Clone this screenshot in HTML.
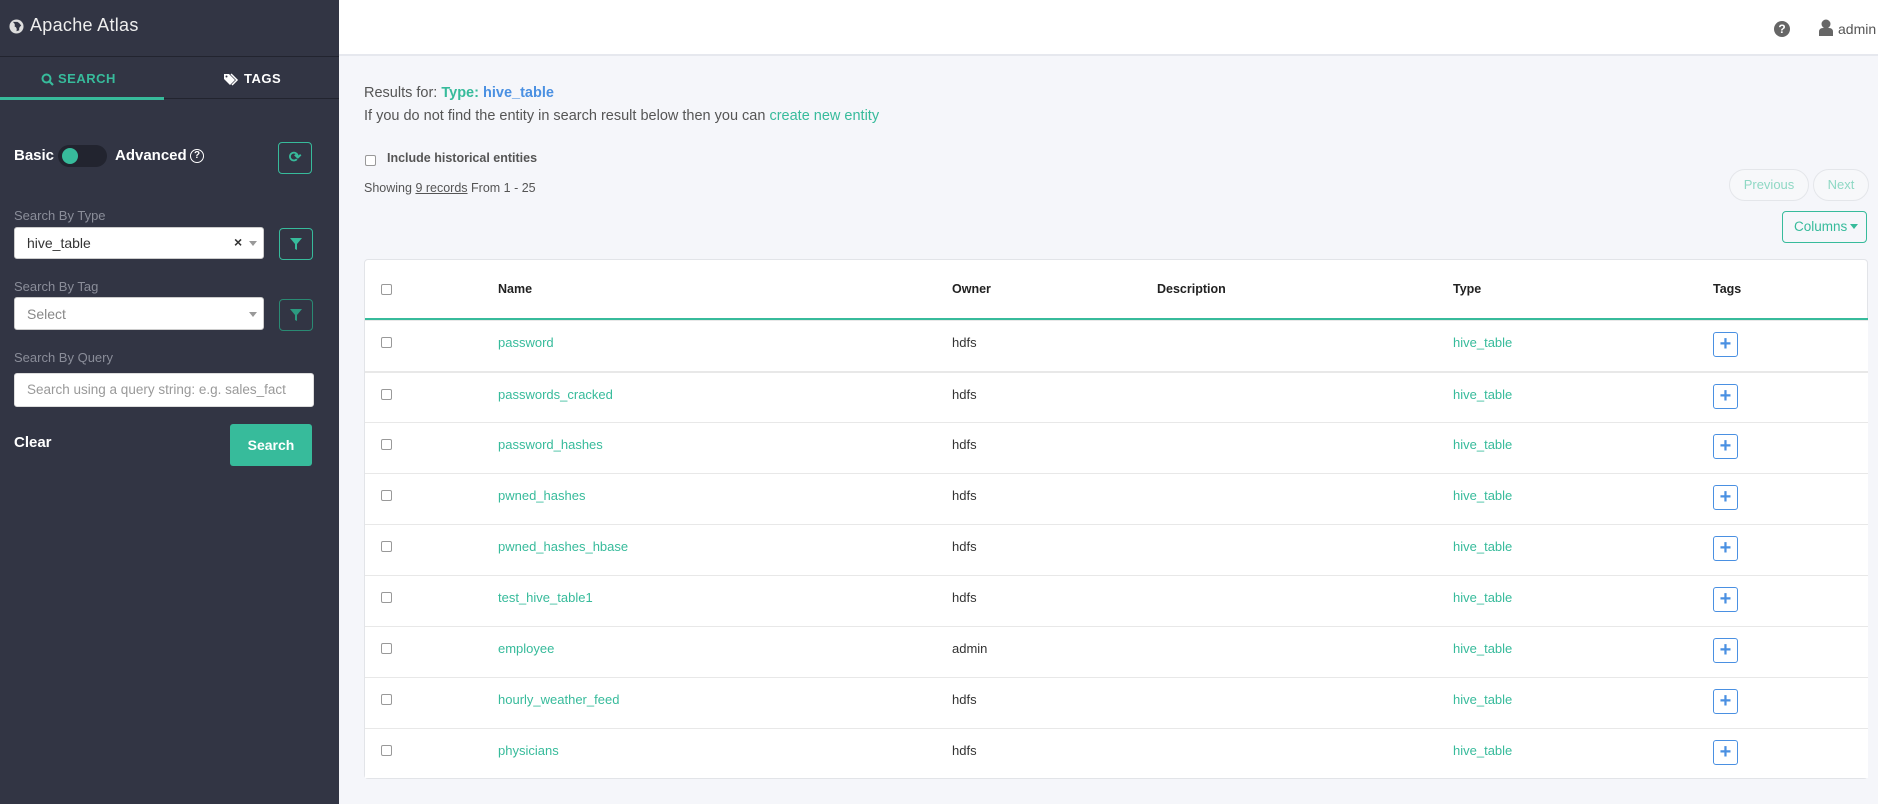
<!DOCTYPE html>
<html><head><meta charset="utf-8"><style>
*{box-sizing:border-box;margin:0;padding:0}
body{width:1878px;height:804px;overflow:hidden;background:#f5f6fa;font-family:"Liberation Sans",sans-serif;font-size:14px;color:#333;position:relative}
.a{position:absolute}
#side{left:0;top:0;width:339px;height:804px;background:#323544;color:#fff}
.g{color:#37bb9b}
.lbl{color:#8a8d99;font-size:13px}
.sel{background:#fff;border-radius:3px;border:1px solid #ccc}
.fbtn{border:1px solid #37bb9b;border-radius:4px;width:34px;height:32px}
.row{left:365px;width:1503px;height:51px;border-top:1px solid #e8e8e8;background:#fff}
.row div{font-size:13px!important}
.cb{width:11px;height:11px;border:1px solid #999;border-radius:2px;background:#fff}
.row .plus{width:25px;height:25px;border:1px solid #4a90e2;border-radius:3px;background:#fff;color:#4a90e2;font-weight:bold;font-size:20px!important;line-height:22px;text-align:center}
</style></head><body>
<div id="side" class="a">
  <div class="a" style="left:0;top:0;width:339px;height:57px;border-bottom:1px solid #22242f"></div>
  <svg class="a" style="left:9px;top:19px" width="15" height="15" viewBox="0 0 16 16"><circle cx="8" cy="8" r="7.5" fill="#ddd"/><path d="M4 3 Q7 5 6 8 Q9 9 8 13 L11 12 Q10 9 13 7 Q11 4 9 3Z" fill="#323544"/></svg>
  <div class="a" style="left:30px;top:15px;font-size:18px;color:#eee;letter-spacing:.3px">Apache Atlas</div>
  <div class="a" style="left:0;top:98px;width:339px;height:1px;background:#22242f"></div>
  <div class="a" style="left:0;top:97px;width:164px;height:3px;background:#37bb9b"></div>
  <svg class="a" style="left:41px;top:73px" width="13" height="13" viewBox="0 0 13 13"><circle cx="5.5" cy="5.5" r="4" stroke="#37bb9b" stroke-width="2" fill="none"/><path d="M8.5 8.5 L12 12" stroke="#37bb9b" stroke-width="2.2"/></svg>
  <div class="a g" style="left:58px;top:71px;font-size:13px;font-weight:bold;letter-spacing:.5px">SEARCH</div>
  <svg class="a" style="left:224px;top:73px" width="15" height="13" viewBox="0 0 15 13"><path d="M0 1 L0 6 L6 12 L11 7 L5 1Z" fill="#fff"/><circle cx="2.5" cy="3.5" r="1" fill="#323544"/><path d="M7 1 L13 7 L8 12" stroke="#fff" stroke-width="1.5" fill="none"/></svg>
  <div class="a" style="left:244px;top:71px;font-size:13px;font-weight:bold;letter-spacing:.5px">TAGS</div>
  <div class="a" style="left:14px;top:147px;font-size:15px;font-weight:bold">Basic</div>
  <div class="a" style="left:58px;top:145px;width:49px;height:22px;border-radius:11px;background:#22242f"></div>
  <div class="a" style="left:62px;top:148px;width:16px;height:16px;border-radius:8px;background:#37bb9b"></div>
  <div class="a" style="left:115px;top:147px;font-size:15px;font-weight:bold">Advanced</div>
  <div class="a" style="left:190px;top:149px;width:14px;height:14px;border:1.5px solid #fff;border-radius:7px;font-size:10px;text-align:center;line-height:11px;font-weight:bold">?</div>
  <div class="a fbtn" style="left:278px;top:142px;height:32px;color:#37bb9b;text-align:center;line-height:30px;font-size:15px;font-weight:bold">⟳</div>
  <div class="a lbl" style="left:14px;top:208px">Search By Type</div>
  <div class="a sel" style="left:14px;top:227px;width:250px;height:32px"></div>
  <div class="a" style="left:27px;top:235px;color:#333">hive_table</div>
  <div class="a" style="left:234px;top:234px;font-size:14px;font-weight:bold;color:#333">×</div>
  <div class="a" style="left:249px;top:241px;border:4px solid transparent;border-top:5px solid #999"></div>
  <div class="a fbtn" style="left:279px;top:228px"></div>
  <svg class="a" style="left:290px;top:238px" width="12" height="12" viewBox="0 0 12 12"><path d="M0 0 H12 L7 6 V12 L5 11 V6Z" fill="#37bb9b"/></svg>
  <div class="a lbl" style="left:14px;top:279px">Search By Tag</div>
  <div class="a sel" style="left:14px;top:297px;width:250px;height:33px"></div>
  <div class="a" style="left:27px;top:306px;color:#888">Select</div>
  <div class="a" style="left:249px;top:312px;border:4px solid transparent;border-top:5px solid #999"></div>
  <div class="a fbtn" style="left:279px;top:299px;border-color:#2a8a73"></div>
  <svg class="a" style="left:290px;top:309px" width="12" height="12" viewBox="0 0 12 12"><path d="M0 0 H12 L7 6 V12 L5 11 V6Z" fill="#2c9a80"/></svg>
  <div class="a lbl" style="left:14px;top:350px">Search By Query</div>
  <div class="a sel" style="left:14px;top:373px;width:300px;height:34px;border-color:#ddd"></div>
  <div class="a" style="left:27px;top:382px;color:#999;font-size:13.5px">Search using a query string: e.g. sales_fact</div>
  <div class="a" style="left:14px;top:434px;font-size:15px;font-weight:bold">Clear</div>
  <div class="a" style="left:230px;top:424px;width:82px;height:42px;background:#37bb9b;border-radius:3px;text-align:center;line-height:42px;font-weight:bold;font-size:14px">Search</div>
</div>
<div class="a" style="left:339px;top:0;width:1539px;height:56px;background:#fff;border-bottom:2px solid #e6e8ee"></div>
<div class="a" style="left:1774px;top:21px;width:16px;height:16px;border-radius:8px;background:#666;color:#fff;font-size:12px;font-weight:bold;text-align:center;line-height:16px">?</div>
<svg class="a" style="left:1819px;top:19px" width="14" height="17" viewBox="0 0 14 17"><circle cx="7" cy="5" r="4.5" fill="#666"/><path d="M0 17 V13 Q0 9 4 9 H10 Q14 9 14 13 V17Z" fill="#666"/></svg>
<div class="a" style="left:1838px;top:21px;color:#555;font-size:14px">admin</div>
<div class="a" style="left:364px;top:85px;font-size:14.5px;color:#555">Results for: <b class="g">Type:</b> <b style="color:#4a90e2">hive_table</b></div>
<div class="a" style="left:364px;top:108px;font-size:14.5px;color:#555">If you do not find the entity in search result below then you can <span class="g">create new entity</span></div>
<div class="a cb" style="left:365px;top:155px"></div>
<div class="a" style="left:387px;top:151px;font-weight:bold;color:#555;font-size:12.5px">Include historical entities</div>
<div class="a" style="left:364px;top:181px;font-size:12.5px;color:#555">Showing <u>9 records</u> From 1 - 25</div>
<div class="a" style="left:1729px;top:169px;width:80px;height:32px;border:1px solid #e4e6ea;border-radius:16px;color:#8fd8c4;text-align:center;line-height:30px;font-size:13px;background:#f7f8fa">Previous</div>
<div class="a" style="left:1813px;top:169px;width:56px;height:32px;border:1px solid #e4e6ea;border-radius:16px;color:#8fd8c4;text-align:center;line-height:30px;font-size:13px;background:#f7f8fa">Next</div>
<div class="a" style="left:1782px;top:211px;width:85px;height:32px;border:1px solid #37bb9b;border-radius:4px;color:#37bb9b;line-height:30px;font-size:13.5px;padding-left:11px">Columns<span style="display:inline-block;margin-left:3px;border:4px solid transparent;border-top:5px solid #37bb9b;vertical-align:-2px"></span></div>
<div class="a" style="left:364px;top:259px;width:1504px;height:520px;background:#fff;border:1px solid #e2e4e8;border-radius:4px"></div>
<div class="a" style="left:365px;top:318px;width:1503px;height:2px;background:#37bb9b"></div>
<div class="a cb" style="left:381px;top:284px"></div>
<div class="a" style="left:498px;top:282px;font-weight:bold;font-size:12.5px;color:#222">Name</div>
<div class="a" style="left:952px;top:282px;font-weight:bold;font-size:12.5px;color:#222">Owner</div>
<div class="a" style="left:1157px;top:282px;font-weight:bold;font-size:12.5px;color:#222">Description</div>
<div class="a" style="left:1453px;top:282px;font-weight:bold;font-size:12.5px;color:#222">Type</div>
<div class="a" style="left:1713px;top:282px;font-weight:bold;font-size:12.5px;color:#222">Tags</div>

<div class="a row" style="top:320px"><div class="a cb" style="left:16px;top:16px"></div><div class="a g" style="left:133px;top:14px">password</div><div class="a" style="left:587px;top:14px">hdfs</div><div class="a g" style="left:1088px;top:14px">hive_table</div><div class="a plus" style="left:1348px;top:11px">+</div></div>
<div class="a row" style="top:371px;border-top-width:2px"><div class="a cb" style="left:16px;top:16px"></div><div class="a g" style="left:133px;top:14px">passwords_cracked</div><div class="a" style="left:587px;top:14px">hdfs</div><div class="a g" style="left:1088px;top:14px">hive_table</div><div class="a plus" style="left:1348px;top:11px">+</div></div>
<div class="a row" style="top:422px"><div class="a cb" style="left:16px;top:16px"></div><div class="a g" style="left:133px;top:14px">password_hashes</div><div class="a" style="left:587px;top:14px">hdfs</div><div class="a g" style="left:1088px;top:14px">hive_table</div><div class="a plus" style="left:1348px;top:11px">+</div></div>
<div class="a row" style="top:473px"><div class="a cb" style="left:16px;top:16px"></div><div class="a g" style="left:133px;top:14px">pwned_hashes</div><div class="a" style="left:587px;top:14px">hdfs</div><div class="a g" style="left:1088px;top:14px">hive_table</div><div class="a plus" style="left:1348px;top:11px">+</div></div>
<div class="a row" style="top:524px"><div class="a cb" style="left:16px;top:16px"></div><div class="a g" style="left:133px;top:14px">pwned_hashes_hbase</div><div class="a" style="left:587px;top:14px">hdfs</div><div class="a g" style="left:1088px;top:14px">hive_table</div><div class="a plus" style="left:1348px;top:11px">+</div></div>
<div class="a row" style="top:575px"><div class="a cb" style="left:16px;top:16px"></div><div class="a g" style="left:133px;top:14px">test_hive_table1</div><div class="a" style="left:587px;top:14px">hdfs</div><div class="a g" style="left:1088px;top:14px">hive_table</div><div class="a plus" style="left:1348px;top:11px">+</div></div>
<div class="a row" style="top:626px"><div class="a cb" style="left:16px;top:16px"></div><div class="a g" style="left:133px;top:14px">employee</div><div class="a" style="left:587px;top:14px">admin</div><div class="a g" style="left:1088px;top:14px">hive_table</div><div class="a plus" style="left:1348px;top:11px">+</div></div>
<div class="a row" style="top:677px"><div class="a cb" style="left:16px;top:16px"></div><div class="a g" style="left:133px;top:14px">hourly_weather_feed</div><div class="a" style="left:587px;top:14px">hdfs</div><div class="a g" style="left:1088px;top:14px">hive_table</div><div class="a plus" style="left:1348px;top:11px">+</div></div>
<div class="a row" style="top:728px;height:50px"><div class="a cb" style="left:16px;top:16px"></div><div class="a g" style="left:133px;top:14px">physicians</div><div class="a" style="left:587px;top:14px">hdfs</div><div class="a g" style="left:1088px;top:14px">hive_table</div><div class="a plus" style="left:1348px;top:11px">+</div></div>
</body></html>
